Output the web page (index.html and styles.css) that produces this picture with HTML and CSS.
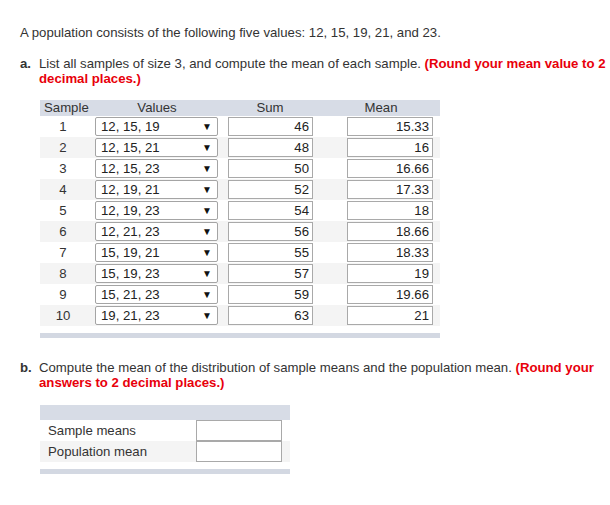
FILE: index.html
```html
<!DOCTYPE html>
<html>
<head>
<meta charset="utf-8">
<link rel="stylesheet" href="styles.css">
</head>
<body>
<div class="page">
  <p class="intro">A population consists of the following five values: 12, 15, 19, 21, and 23.</p>

  <div class="part">
    <span class="label">a.</span>
    <p class="question">List all samples of size 3, and compute the mean of each sample. <span class="hint">(Round your mean value to 2</span> <span class="hint">decimal places.)</span></p>
  </div>

  <div class="grid samples">
    <div class="hd c-sample">Sample</div>
    <div class="hd c-values">Values</div>
    <div class="hd c-sum">Sum</div>
    <div class="hd c-mean">Mean</div>

    <div class="row"><div class="num">1</div><div class="cell"><div class="select"><span>12, 15, 19</span><span class="arrow">▼</span></div></div><div class="cell sumc"><div class="box">46</div></div><div class="cell meanc"><div class="box">15.33</div></div></div>
    <div class="row alt"><div class="num">2</div><div class="cell"><div class="select"><span>12, 15, 21</span><span class="arrow">▼</span></div></div><div class="cell sumc"><div class="box">48</div></div><div class="cell meanc"><div class="box">16</div></div></div>
    <div class="row"><div class="num">3</div><div class="cell"><div class="select"><span>12, 15, 23</span><span class="arrow">▼</span></div></div><div class="cell sumc"><div class="box">50</div></div><div class="cell meanc"><div class="box">16.66</div></div></div>
    <div class="row alt"><div class="num">4</div><div class="cell"><div class="select"><span>12, 19, 21</span><span class="arrow">▼</span></div></div><div class="cell sumc"><div class="box">52</div></div><div class="cell meanc"><div class="box">17.33</div></div></div>
    <div class="row"><div class="num">5</div><div class="cell"><div class="select"><span>12, 19, 23</span><span class="arrow">▼</span></div></div><div class="cell sumc"><div class="box">54</div></div><div class="cell meanc"><div class="box">18</div></div></div>
    <div class="row alt"><div class="num">6</div><div class="cell"><div class="select"><span>12, 21, 23</span><span class="arrow">▼</span></div></div><div class="cell sumc"><div class="box">56</div></div><div class="cell meanc"><div class="box">18.66</div></div></div>
    <div class="row"><div class="num">7</div><div class="cell"><div class="select"><span>15, 19, 21</span><span class="arrow">▼</span></div></div><div class="cell sumc"><div class="box">55</div></div><div class="cell meanc"><div class="box">18.33</div></div></div>
    <div class="row alt"><div class="num">8</div><div class="cell"><div class="select"><span>15, 19, 23</span><span class="arrow">▼</span></div></div><div class="cell sumc"><div class="box">57</div></div><div class="cell meanc"><div class="box">19</div></div></div>
    <div class="row"><div class="num">9</div><div class="cell"><div class="select"><span>15, 21, 23</span><span class="arrow">▼</span></div></div><div class="cell sumc"><div class="box">59</div></div><div class="cell meanc"><div class="box">19.66</div></div></div>
    <div class="row alt"><div class="num">10</div><div class="cell"><div class="select"><span>19, 21, 23</span><span class="arrow">▼</span></div></div><div class="cell sumc"><div class="box">63</div></div><div class="cell meanc"><div class="box">21</div></div></div>
    <div class="foot"></div>
  </div>

  <div class="part part-b">
    <span class="label">b.</span>
    <p class="question">Compute the mean of the distribution of sample means and the population mean. <span class="hint">(Round your</span> <span class="hint">answers to 2 decimal places.)</span></p>
  </div>

  <div class="means">
    <div class="mhead"></div>
    <div class="mrow"><span>Sample means</span><div class="box empty"></div></div>
    <div class="mrow alt"><span>Population mean</span><div class="box empty"></div></div>
    <div class="foot"></div>
  </div>
</div>
</body>
</html>
```

FILE: styles.css
```css
html, body {
  margin: 0;
  padding: 0;
  background: #fff;
}
body {
  font-family: "Liberation Sans", Arial, sans-serif;
  font-size: 13.2px;
  color: #333;
}
.page {
  padding: 25px 0 0 20px;
}
p { margin: 0; }
.intro {
  line-height: 16px;
}
.part {
  display: flex;
  margin-top: 15px;
  line-height: 15.3px;
  width: 590px;
}
.label {
  font-weight: bold;
  width: 19px;
  flex: none;
}
.hint {
  color: #e8000b;
  font-weight: bold;
}
.grid.samples {
  margin: 13px 0 0 20px;
  width: 400px;
  display: grid;
  grid-template-columns: 52px 130px 96px 122px;
}
.hd {
  background: #d7dce6;
  height: 16px;
  line-height: 16px;
  text-align: center;
}
.c-sample { text-align: left; padding-left: 4px; }
.c-mean { padding-left: 4px; }
.row {
  display: contents;
}
.row > div {
  height: 21px;
  display: flex;
  align-items: center;
}
.row.alt > div {
  background: #f4f4f4;
}
.num {
  justify-content: center;
  padding-right: 6px;
}
.select {
  margin-left: 3px;
  width: 123px;
  height: 19px;
  border: 1px solid #a4a4a4;
  border-radius: 2px;
  background: #fff;
  display: flex;
  align-items: center;
  justify-content: space-between;
  padding: 0 5px 0 5px;
  box-sizing: border-box;
  color: #222;
}
.arrow {
  font-size: 10px;
  color: #111;
}
.box {
  height: 19px;
  border: 1px solid #a9a9a9;
  box-sizing: border-box;
  background: #fff;
  text-align: right;
  padding-right: 3px;
  line-height: 17px;
  color: #222;
}
.sumc .box {
  margin-left: 6px;
  width: 85px;
}
.meanc .box {
  margin-left: 29px;
  width: 86px;
}
.foot {
  grid-column: 1 / -1;
  height: 5px;
  margin-top: 7px;
  background: #d3d8e2;
}
.part-b {
  margin-top: 22px;
}
.means {
  margin: 15px 0 0 20px;
  width: 250px;
}
.mhead {
  height: 15px;
  background: #d7dce6;
}
.mrow {
  height: 21px;
  display: flex;
  align-items: center;
  justify-content: space-between;
  padding: 0 8px 0 8px;
}
.mrow.alt {
  background: #f4f4f4;
}
.means .box.empty {
  width: 86px;
  height: 21px;
}
.means .foot {
  margin-top: 7px;
}
```
